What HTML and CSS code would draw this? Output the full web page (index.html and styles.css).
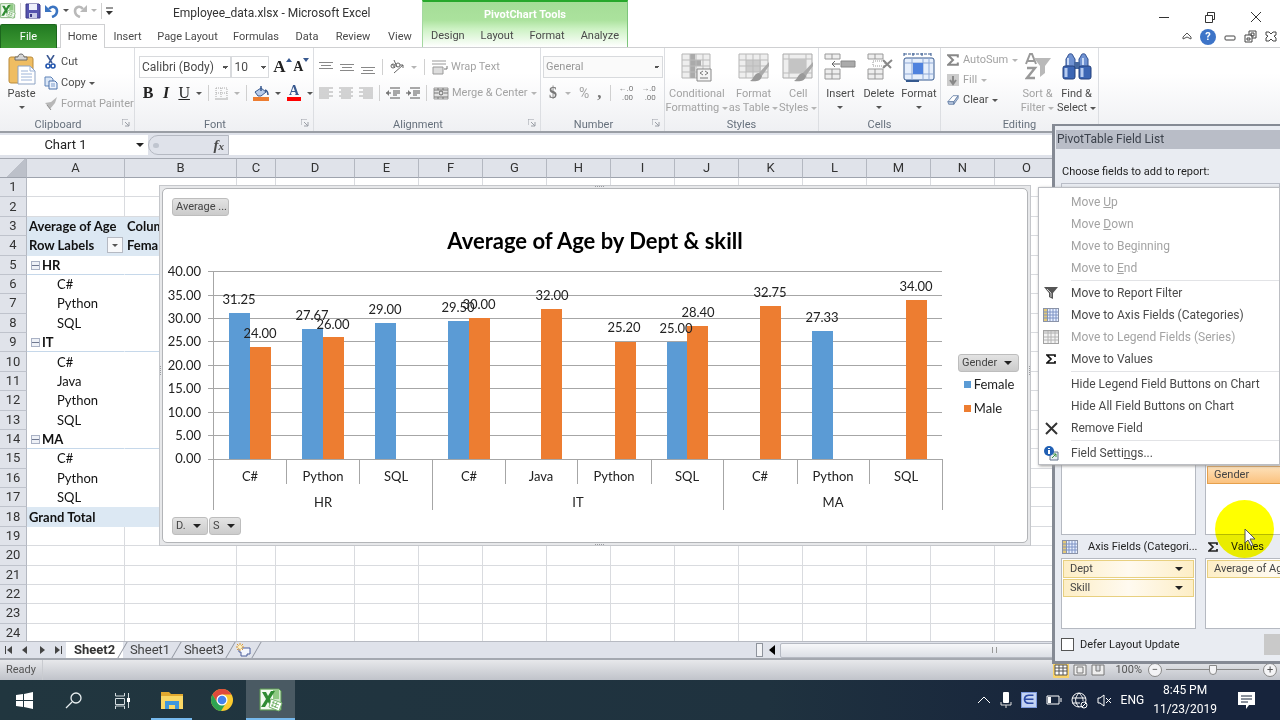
FILE: index.html
```html
<!DOCTYPE html>
<html lang="en">
<head>
<meta charset="utf-8">
<title>Employee_data.xlsx - Microsoft Excel</title>
<link rel="stylesheet" href="styles.css">
</head>
<body>
<svg class="defs" aria-hidden="true">
  <symbol id="excel" viewBox="0 0 24 24">
    <path d="M1 1h19l2 2v19H1z" fill="#cfe8cb" stroke="#5c9b52"/>
    <path d="M2 2h12v19H2z" fill="#f2faf0"/><path d="M14 2h6v9h-6z" fill="#8ec983"/>
    <path d="M3 4h4l2 4 3-5h4l-5 8 5 8h-4l-3-5-3 5H2l5-8z" fill="#2f8b33"/>
    <path d="M12 11l11 4-3 8-10-4z" fill="#fff" stroke="#79b56f"/><path d="M13 14l7 3M12 17l7 3M15 13l-2 6M18 14l-2 6" stroke="#79b56f"/>
  </symbol>
  <symbol id="launch" viewBox="0 0 8 8"><path d="M0 6V0h6M3 3l4 4M7 3v4H3" fill="none" stroke="#9a9ea6"/></symbol>
  <symbol id="grid" viewBox="0 0 16 14">
    <path d="M0 0h16v14H0z" fill="#8a93a8"/><path d="M1 1h3v12H1z" fill="#e2c878"/><path d="M5 1h10v12H5z" fill="#e8f0ff"/>
    <path d="M1 4h14M1 7h14M1 10h14M7 1v12M10 1v12M13 1v12" stroke="#7d92c4" fill="none"/>
  </symbol>
  <symbol id="gridgray" viewBox="0 0 16 14">
    <path d="M0 0h16v14H0z" fill="#a2a2a2"/><path d="M1 4h14v9H1z" fill="#f3f3f3"/><path d="M1 1h14v3H1z" fill="#cfcfcf"/>
    <path d="M1 7h14M1 10h14M5 1v12M8 1v12M12 1v12" stroke="#b4b4b4" fill="none"/>
  </symbol>
  <symbol id="sigma" viewBox="0 0 10 10"><path d="M9 3V1H1l4 4-4 4h8V7" fill="none" stroke="currentColor" stroke-width="1.7"/></symbol>
</svg>

<header class="top">
  <div class="top-main">
    <div class="quick">
      <svg width="16" height="16"><use href="#excel"/></svg>
      <i class="rule"></i>
      <button aria-label="Save"><svg width="16" height="16" viewBox="0 0 16 16"><path d="M1 1h13l1 1v13H1z" fill="#5553ae" stroke="#3c3a86"/><path d="M4 1h8v6H4z" fill="#eef0fb"/><path d="M4 10h8v5H4z" fill="#c8cbe8"/><path d="M5 11h2v3H5z" fill="#3c3a86"/></svg></button>
      <button aria-label="Undo"><svg width="14" height="14" viewBox="0 0 14 14"><path d="M4 5c3-4 8-2 8 2 0 3-2 5-5 6" fill="none" stroke="#3b74c1" stroke-width="2.6"/><path d="M0 1v7h7z" fill="#3b74c1"/></svg></button>
      <i class="caret"></i>
      <button aria-label="Redo"><svg width="14" height="14" viewBox="0 0 14 14"><path d="M10 5C7 1 2 3 2 7c0 3 2 5 5 6" fill="none" stroke="#b9b9b9" stroke-width="2.6"/><path d="M14 1v7H7z" fill="#b9b9b9"/></svg></button>
      <i class="caret dim"></i>
      <i class="rule"></i>
      <button aria-label="Customize toolbar"><svg width="7" height="8" viewBox="0 0 7 8"><path d="M0 1h7" stroke="#333"/><path d="M0 4h7L3 8z" fill="#333"/></svg></button>
      <h1>Employee_data.xlsx - Microsoft Excel</h1>
    </div>
    <nav class="tabs">
      <button class="file">File</button>
      <button class="active">Home</button>
      <button class="w-insert">Insert</button>
      <button class="w-page">Page Layout</button>
      <button class="w-form">Formulas</button>
      <button class="w-data">Data</button>
      <button class="w-rev">Review</button>
      <button class="w-view">View</button>
    </nav>
  </div>
  <div class="context">
    <strong>PivotChart Tools</strong>
    <nav><button>Design</button><button>Layout</button><button>Format</button><button>Analyze</button></nav>
  </div>
  <div class="window">
    <div class="winbtns">
      <button aria-label="Minimize"><svg width="12" height="12"><path d="M1 6.500h10" stroke="#333"/></svg></button>
      <button aria-label="Restore"><svg width="12" height="12" fill="none" stroke="#333"><path d="M1.500 4.500h7v7h-7zM3.500 4V1.500h7v7H9"/></svg></button>
      <button aria-label="Close"><svg width="12" height="12" stroke="#333"><path d="M1 1l10 10M11 1L1 11"/></svg></button>
    </div>
    <div class="docbtns">
      <button aria-label="Collapse ribbon"><svg width="10" height="9" fill="none" stroke="#555"><path d="M1 5l4-4 4 4v2L5 5 1 7z"/></svg></button>
      <button class="help" aria-label="Help">?</button>
      <button aria-label="Minimize workbook"><svg width="12" height="8" fill="none" stroke="#444"><rect x="1" y="3" width="10" height="4" rx="1"/></svg></button>
      <button aria-label="Restore workbook"><svg width="13" height="13" fill="#fff" stroke="#444"><path d="M5 1h7v7H5z"/><path d="M7 3h3v3H7zM1 5h7v7H1z"/><path d="M3 8h3v2H3z"/></svg></button>
      <button aria-label="Close workbook"><svg width="12" height="11" viewBox="0 0 12 11" fill="#fff" stroke="#444"><path d="M1 1h3l2 2 2-2h3v3L9 5l2 2v3H8L6 8l-2 2H1V7l2-2-2-1z"/></svg></button>
    </div>
  </div>
</header>

<section class="ribbon">
  <div class="group g-clip">
    <div class="body">
      <button class="big"><svg width="28" height="32" viewBox="0 0 28 32"><rect x="1" y="4" width="24" height="26" rx="2" fill="#efbd62" stroke="#b98b3c"/><path d="M7 7V4h3c0-4 6-4 6 0h3v3z" fill="#d5d5d5" stroke="#6d6d6d"/><path d="M10 13h12l5 5v13H10z" fill="#fff" stroke="#8da3c4"/><path d="M22 13v5h5M13 18h7M13 21h11M13 24h11M13 27h11" stroke="#9db4d8" fill="none"/></svg>Paste<i class="caret"></i></button>
      <div class="stack clip-stack">
        <button><svg width="14" height="14" viewBox="0 0 14 14"><path d="M3 0l5 8M10 0L5 8" stroke="#3d5a94" stroke-width="1.6"/><circle cx="4" cy="11" r="2" fill="none" stroke="#2356ae" stroke-width="1.6"/><circle cx="9" cy="11" r="2" fill="none" stroke="#2356ae" stroke-width="1.6"/></svg>Cut</button>
        <button><svg width="14" height="14" viewBox="0 0 14 14"><path d="M1 1h6l2 2v7H1z" fill="#dbe7f7" stroke="#5f83b8"/><path d="M5 5h6l2 2v6H5z" fill="#eef4fd" stroke="#4a70aa"/><path d="M7 8h4M7 10h4" stroke="#7d9bcb"/></svg>Copy<i class="caret"></i></button>
        <button disabled><svg width="14" height="14" viewBox="0 0 14 14"><path d="M1 6l6-1 6-5-2 6-5 6-2-3z" fill="#b7b7b7"/><path d="M3 8l4 5" stroke="#8b8b8b"/></svg>Format Painter</button>
      </div>
    </div>
    <footer>Clipboard<svg><use href="#launch"/></svg></footer>
  </div>

  <div class="group g-font">
    <div class="body rows">
      <div class="line">
        <select class="face" aria-label="Font"><option>Calibri (Body)</option></select><select class="size" aria-label="Font size"><option>10</option></select>
        <button class="serif s17" aria-label="Grow font">A<svg width="6" height="4"><path d="M0 4l3-4 3 4z" fill="#38598f"/></svg></button>
        <button class="serif s14" aria-label="Shrink font">A<svg width="6" height="4"><path d="M0 0l3 4 3-4z" fill="#38598f"/></svg></button>
      </div>
      <div class="line fmt">
        <button class="serif s16">B</button><button class="serif s16 it">I</button><button class="serif s16 un">U</button><i class="caret"></i>
        <i class="rule"></i>
        <button disabled aria-label="Borders"><svg width="13" height="13" fill="none" stroke="#aaa" stroke-dasharray="1 1"><path d="M1 1h11v10M1 1v10M6 1v10M1 6h11"/><path d="M0 12h13" stroke-dasharray="none"/></svg></button><i class="caret dim"></i>
        <i class="rule"></i>
        <button aria-label="Fill color"><svg width="16" height="16" viewBox="0 0 16 16"><path d="M2 7l6-4 5 4-5 4H5z" fill="#b9cdeb" stroke="#38598f"/><path d="M8 6V1M12 5c3 1 3 3 3 5" stroke="#38598f" fill="none" stroke-width="1.5"/><path d="M0 12h16v4H0z" fill="#ed7d31"/></svg></button><i class="caret"></i>
        <button class="serif fontcolor" aria-label="Font color">A</button><i class="caret"></i>
      </div>
    </div>
    <footer>Font<svg><use href="#launch"/></svg></footer>
  </div>

  <div class="group g-align">
    <div class="body rows">
      <div class="line">
        <button disabled aria-label="Top"><svg width="14" height="14" stroke="#888"><path d="M0 2.500h14M2 5.500h10M0 8.500h14"/></svg></button>
        <button disabled aria-label="Middle"><svg width="14" height="14" stroke="#888"><path d="M0 4.500h14M2 7.500h10M0 10.500h14"/></svg></button>
        <button disabled aria-label="Bottom"><svg width="14" height="14" stroke="#888"><path d="M0 7.500h14M2 10.500h10M0 13.500h14"/></svg></button>
        <i class="rule"></i>
        <button disabled aria-label="Orientation"><svg width="14" height="14" viewBox="0 0 14 14" fill="none" stroke="#666"><circle cx="3" cy="6" r="2"/><circle cx="8" cy="5" r="2"/><path d="M5 8L2 4M7 7L4 0M4 13l9-8M13 5v3M13 5h-3"/></svg></button><i class="caret dim"></i>
        <i class="rule"></i>
        <button disabled><svg width="16" height="15" viewBox="0 0 16 15"><path d="M0 1h14M0 4h14" stroke="#999"/><path d="M1 7h10v7H1z" fill="#ddd" stroke="#999"/><path d="M15 6v3h-3" fill="none" stroke="#777"/></svg>Wrap Text</button>
      </div>
      <div class="line tight">
        <button disabled aria-label="Left"><svg width="14" height="12" stroke="#aaa"><path d="M0 1h14M0 3h10M0 5h14M0 7h10M0 9h14M0 11h10"/></svg></button>
        <button disabled aria-label="Center"><svg width="14" height="12" stroke="#aaa"><path d="M0 1h14M2 3h10M0 5h14M2 7h10M0 9h14M2 11h10"/></svg></button>
        <button disabled aria-label="Right"><svg width="14" height="12" stroke="#aaa"><path d="M0 1h14M4 3h10M0 5h14M4 7h10M0 9h14M4 11h10"/></svg></button>
        <i class="rule"></i>
        <button aria-label="Decrease indent"><svg width="14" height="12" stroke="#555"><path d="M4 1h10M7 4h7M7 6h7M7 8h4M4 11h10M0 6h5" /><path d="M3 3L0 6l3 3" fill="#777" stroke="none"/></svg></button>
        <button aria-label="Increase indent"><svg width="14" height="12" stroke="#555"><path d="M4 1h10M7 4h7M7 6h7M7 8h4M4 11h10M0 6h5"/><path d="M2 3l3 3-3 3" fill="#777" stroke="none"/></svg></button>
        <i class="rule"></i>
        <button disabled><svg width="16" height="13" viewBox="0 0 16 13"><path d="M1 1h14v11H1z" fill="#e3e3e3" stroke="#999"/><path d="M1 3h14M1 10h14M5 1v2M10 1v2M5 10v2M10 10v2M1 6h4M11 6h4" stroke="#777"/><circle cx="8" cy="6" r="2" fill="none" stroke="#666"/></svg>Merge &amp; Center<i class="caret dim"></i></button>
      </div>
    </div>
    <footer>Alignment<svg><use href="#launch"/></svg></footer>
  </div>

  <div class="group g-num">
    <div class="body rows">
      <div class="line"><select class="numfmt" aria-label="Number format"><option>General</option></select></div>
      <div class="line">
        <button disabled class="serif s16">$</button><i class="caret dim"></i><button disabled class="s14">%</button><button disabled class="serif s17">,</button>
        <i class="rule"></i>
        <button disabled class="dec"><span>←.0</span><span>.00</span></button><button disabled class="dec"><span>→.0</span><span>.00</span></button>
      </div>
    </div>
    <footer>Number<svg><use href="#launch"/></svg></footer>
  </div>

  <div class="group g-style">
    <div class="body three">
      <button class="big" disabled><svg width="32" height="30" viewBox="0 0 32 30"><path d="M1 1h28v24H1z" fill="#eee" stroke="#b5b5b5"/><path d="M9 1h5v24H9zM14 7h6v6h-6z" fill="#aaa"/><path d="M1 7h28M1 13h28M1 19h28M9 1v24M15 1v24M22 1v24" stroke="#bbb"/><path d="M16 16h14v12H16z" fill="#f4f4f4" stroke="#888"/><path d="M22 18l-3 2 3 2M24 18l3 2-3 2M19 25h8" stroke="#777" fill="none"/></svg>Conditional<span>Formatting<i class="caret dim"></i></span></button>
      <button class="big" disabled><svg width="32" height="30" viewBox="0 0 32 30"><path d="M1 1h29v24H1z" fill="#eee" stroke="#b5b5b5"/><path d="M8 7h15v12H8z" fill="#ccc"/><path d="M1 7h29M1 13h29M1 19h29M8 1v24M15 1v24M22 1v24" stroke="#bbb"/><path d="M31 9L20 21l3 3 8-11z" fill="#aaa"/><path d="M21 20c-5 0-5 6-9 8 6 1 11 0 12-5z" fill="#999"/></svg>Format<span>as Table<i class="caret dim"></i></span></button>
      <button class="big" disabled><svg width="32" height="30" viewBox="0 0 32 30"><path d="M1 1h29v24H1z" fill="#eee" stroke="#aaa"/><path d="M1 6h29M1 20h29M7 1v24M24 1v24" stroke="#bbb"/><path d="M7 6h17v14H7z" fill="#c4c4c4"/><path d="M31 9L20 21l3 3 8-11z" fill="#aaa"/><path d="M21 20c-5 0-5 6-9 8 6 1 11 0 12-5z" fill="#999"/></svg>Cell<span>Styles<i class="caret dim"></i></span></button>
    </div>
    <footer>Styles</footer>
  </div>

  <div class="group g-cells">
    <div class="body three">
      <button class="big"><svg width="32" height="30" viewBox="0 0 32 30"><path d="M1 1h15v5H1zM1 16h15v10H1zM8 1v5M8 16v10M1 21h15" fill="#eee" stroke="#999"/><path d="M17 8h14v6H17z" fill="#aaa" stroke="#888"/><path d="M16 11H8M11 8l-3 3 3 3" fill="none" stroke="#666"/></svg>Insert<i class="caret"></i></button>
      <button class="big"><svg width="28" height="30" viewBox="0 0 28 30"><path d="M3 1h15v5H3zM3 16h15v10H3zM10 1v5M10 16v10M3 21h15" fill="#eee" stroke="#999"/><path d="M8 8h12v5H8z" fill="none" stroke="#999" stroke-dasharray="1 1"/><path d="M18 7l8 8M27 7l-9 8" stroke="#888" stroke-width="2"/></svg>Delete<i class="caret"></i></button>
      <button class="big"><svg width="32" height="30" viewBox="0 0 32 30"><path d="M1 1h27M1 0v3M10 0v3M19 0v3M28 0v3" stroke="#35598f" stroke-dasharray="3 1"/><rect x="1" y="5" width="30" height="22" rx="2" fill="#e6effc" stroke="#35598f"/><path d="M2 10h28M2 21h28M9 5v22M20 5v22M26 5v22" stroke="#8fa9d6"/><path d="M10 10h10v11H10z" fill="#4f82de"/><path d="M3 28h13" stroke="#35598f" stroke-width="2"/></svg>Format<i class="caret"></i></button>
    </div>
    <footer>Cells</footer>
  </div>

  <div class="group g-edit">
    <div class="body">
      <div class="stack edit-stack">
        <button disabled><svg class="gray" width="12" height="12"><use href="#sigma"/></svg>AutoSum<i class="caret dim"></i></button>
        <button disabled><svg width="12" height="12"><path d="M0 0h12v12H0z" fill="#ccc"/><path d="M6 2v7M3 6l3 4 3-4" stroke="#888" fill="none" stroke-width="2"/></svg>Fill<i class="caret dim"></i></button>
        <button><svg width="12" height="12" viewBox="0 0 14 12"><path d="M1 8l6-7h6L8 8z" fill="#fff" stroke="#667fa5"/><path d="M1 8h7v3H2zM8 8l5-7v3l-5 7z" fill="#bccbe2" stroke="#667fa5"/></svg>Clear<i class="caret"></i></button>
      </div>
      <button class="big" disabled><svg width="26" height="28" viewBox="0 0 26 28"><path d="M1 11L5 1h2l4 10M3 8h6" fill="none" stroke="#999" stroke-width="2"/><path d="M2 15h8L2 25h8" fill="none" stroke="#999" stroke-width="2.4"/><path d="M9 5h17l-6 8v7l-5 4V13z" fill="#b9b9b9"/></svg>Sort &amp;<span>Filter<i class="caret dim"></i></span></button>
      <button class="big"><svg width="30" height="28" viewBox="0 0 30 28"><path d="M6 3c0-3 5-3 5 0l2 3v8H4V6zM19 3c0-3 5-3 5 0l2 3v8h-9V6z" fill="#6f92d2" stroke="#2e4e8f"/><path d="M12 9h6v7h-6z" fill="#46689f"/><rect x="1" y="13" width="12" height="13" rx="2" fill="#3c66b4" stroke="#24417c"/><rect x="17" y="13" width="12" height="13" rx="2" fill="#3c66b4" stroke="#24417c"/><path d="M4 15v9M20 15v9" stroke="#b6cbf0" stroke-width="3"/><path d="M6 5v7M21 5v7" stroke="#c9daf6" stroke-width="2"/></svg>Find &amp;<span>Select<i class="caret"></i></span></button>
    </div>
    <footer>Editing</footer>
  </div>
</section>

<section class="formula">
  <input class="namebox" aria-label="Name box" value="Chart 1"><button class="namedrop" aria-label="Names"><i class="caret lg"></i></button>
  <div class="fxbar"><i></i><button class="fx">f<small>x</small></button></div>
  <input class="fxinput" aria-label="Formula">
</section>

<main class="sheet">
  <table>
    <colgroup><col class="c0"><col class="ca"><col class="cb"><col class="cc"><col class="cd"><col class="cn"><col class="cn"><col class="cn"><col class="cn"><col class="cn"><col class="cn"><col class="cn"><col class="cn"><col class="cn"><col class="cn"><col class="cn"><col></colgroup>
    <thead><tr><th class="corner"></th><th>A</th><th>B</th><th>C</th><th>D</th><th>E</th><th>F</th><th>G</th><th>H</th><th>I</th><th>J</th><th>K</th><th>L</th><th>M</th><th>N</th><th>O</th><th></th></tr></thead>
    <tbody>
      <tr><th>1</th><td></td><td></td><td></td><td></td><td></td><td></td><td></td><td></td><td></td><td></td><td></td><td></td><td></td><td></td><td></td><td></td></tr>
      <tr><th>2</th><td></td><td></td><td></td><td></td><td></td><td></td><td></td><td></td><td></td><td></td><td></td><td></td><td></td><td></td><td></td><td></td></tr>
      <tr class="band"><th>3</th><td>Average of Age</td><td>Column Labels</td><td colspan="14"></td></tr>
      <tr class="band"><th>4</th><td><span class="rl">Row Labels<button aria-label="Filter rows"><i class="caret"></i></button></span></td><td>Female</td><td colspan="14"></td></tr>
      <tr class="head"><th>5</th><td><i class="minus"></i>HR</td><td></td><td colspan="14"></td></tr>
      <tr class="item"><th>6</th><td>C#</td><td></td><td colspan="14"></td></tr>
      <tr class="item"><th>7</th><td>Python</td><td></td><td colspan="14"></td></tr>
      <tr class="item"><th>8</th><td>SQL</td><td></td><td colspan="14"></td></tr>
      <tr class="head"><th>9</th><td><i class="minus"></i>IT</td><td></td><td colspan="14"></td></tr>
      <tr class="item"><th>10</th><td>C#</td><td></td><td colspan="14"></td></tr>
      <tr class="item"><th>11</th><td>Java</td><td></td><td colspan="14"></td></tr>
      <tr class="item"><th>12</th><td>Python</td><td></td><td colspan="14"></td></tr>
      <tr class="item"><th>13</th><td>SQL</td><td></td><td colspan="14"></td></tr>
      <tr class="head"><th>14</th><td><i class="minus"></i>MA</td><td></td><td colspan="14"></td></tr>
      <tr class="item"><th>15</th><td>C#</td><td></td><td colspan="14"></td></tr>
      <tr class="item"><th>16</th><td>Python</td><td></td><td colspan="14"></td></tr>
      <tr class="item"><th>17</th><td>SQL</td><td></td><td colspan="14"></td></tr>
      <tr class="band"><th>18</th><td>Grand Total</td><td></td><td colspan="14"></td></tr>
      <tr><th>19</th><td></td><td></td><td></td><td></td><td></td><td></td><td></td><td></td><td></td><td></td><td></td><td></td><td></td><td></td><td></td><td></td></tr>
      <tr><th>20</th><td></td><td></td><td></td><td></td><td></td><td></td><td></td><td></td><td></td><td></td><td></td><td></td><td></td><td></td><td></td><td></td></tr>
      <tr><th>21</th><td></td><td></td><td></td><td></td><td></td><td></td><td></td><td></td><td></td><td></td><td></td><td></td><td></td><td></td><td></td><td></td></tr>
      <tr><th>22</th><td></td><td></td><td></td><td></td><td></td><td></td><td></td><td></td><td></td><td></td><td></td><td></td><td></td><td></td><td></td><td></td></tr>
      <tr><th>23</th><td></td><td></td><td></td><td></td><td></td><td></td><td></td><td></td><td></td><td></td><td></td><td></td><td></td><td></td><td></td><td></td></tr>
      <tr><th>24</th><td></td><td></td><td></td><td></td><td></td><td></td><td></td><td></td><td></td><td></td><td></td><td></td><td></td><td></td><td></td><td></td></tr>
    </tbody>
  </table>

  <section class="chart" aria-label="Average of Age by Dept and skill">
    <svg class="plot" viewBox="163 189 864 353">
      <text class="ctitle" x="595" y="249">Average of Age by Dept &amp; skill</text>
      <g class="lines">
        <path d="M208 271.500H942M208 295.500H942M208 318.500H942M208 341.500H942M208 365.500H942M208 388.500H942M208 412.500H942M208 435.500H942M208 459.500H942"/>
        <path d="M213.500 271V510M432.500 459V510M723.500 459V510M942.500 459V510M286.500 459V484M359.500 459V484M505.500 459V484M577.500 459V484M651.500 459V484M797.500 459V484M869.500 459V484"/>
      </g>
      <g class="axis">
        <text x="201" y="276">40.00</text><text x="201" y="300">35.00</text><text x="201" y="323">30.00</text><text x="201" y="346">25.00</text><text x="201" y="370">20.00</text><text x="201" y="393">15.00</text><text x="201" y="417">10.00</text><text x="201" y="440">5.00</text><text x="201" y="463">0.00</text>
      </g>
      <g class="female">
        <path d="M229 313h21v146h-21zM302 329h21v130h-21zM375 323h21v136h-21zM448 321h21v138h-21zM667 342h21v117h-21zM812 331h21v128h-21z"/>
        <path d="M964 381h7v7h-7z"/>
      </g>
      <g class="male">
        <path d="M250 347h21v112h-21zM323 337h21v122h-21zM469 318h21v141h-21zM541 309h21v150h-21zM615 342h21v117h-21zM687 326h21v133h-21zM760 306h21v153h-21zM906 300h21v159h-21z"/>
        <path d="M964 405h7v7h-7z"/>
      </g>
      <g class="labels">
        <text x="239" y="304">31.25</text><text x="260" y="338">24.00</text><text x="312" y="320">27.67</text><text x="333" y="329">26.00</text><text x="385" y="314">29.00</text><text x="458" y="312">29.50</text><text x="479" y="309">30.00</text><text x="552" y="300">32.00</text><text x="624" y="332">25.20</text><text x="676" y="333">25.00</text><text x="698" y="317">28.40</text><text x="770" y="297">32.75</text><text x="822" y="322">27.33</text><text x="916" y="291">34.00</text>
        <text x="250" y="481">C#</text><text x="323" y="481">Python</text><text x="396" y="481">SQL</text><text x="469" y="481">C#</text><text x="541" y="481">Java</text><text x="614" y="481">Python</text><text x="687" y="481">SQL</text><text x="760" y="481">C#</text><text x="833" y="481">Python</text><text x="906" y="481">SQL</text>
        <text x="323" y="507">HR</text><text x="578" y="507">IT</text><text x="833" y="507">MA</text>
        <text x="994" y="389">Female</text><text x="988" y="413">Male</text>
      </g>
    </svg>
    <i class="grip top-grip"></i><i class="grip bottom-grip"></i><i class="grip left-grip"></i><i class="grip right-grip"></i>
    <button class="fieldbtn f-avg">Average ...</button>
    <button class="fieldbtn f-gender">Gender<i class="caret lg"></i></button>
    <div class="f-axis"><button class="fieldbtn">D.<i class="caret lg"></i></button><button class="fieldbtn">S<i class="caret lg"></i></button></div>
  </section>
</main>

<section class="sheetbar">
  <div class="navs">
    <button aria-label="First"><svg width="8" height="8"><path d="M0 0h1v8H0zM7 0v8L2 4z"/></svg></button>
    <button aria-label="Previous"><svg width="8" height="8"><path d="M6 0v8L1 4z"/></svg></button>
    <button aria-label="Next"><svg width="8" height="8"><path d="M2 0v8l5-4z"/></svg></button>
    <button aria-label="Last"><svg width="8" height="8"><path d="M7 0h1v8H7zM1 0v8l5-4z"/></svg></button>
  </div>
  <button class="stab on">Sheet2</button><button class="stab">Sheet1</button><button class="stab">Sheet3</button>
  <button class="stab new" aria-label="New sheet"><svg width="15" height="14" viewBox="0 0 15 14"><path d="M3 5h11v6h-3v2H5V9H3z" fill="#f4f7fe" stroke="#4d5f9c"/><path d="M4 0v8M0 4h8M1 1l6 6M7 1L1 7" stroke="#e09a2b"/><circle cx="4" cy="4" r="2" fill="#fff3c0"/></svg></button>
  <div class="scroll"><i class="split"></i><button aria-label="Scroll left"><svg width="6" height="10"><path d="M6 0v10L0 5z"/></svg></button><div class="thumb"><i></i></div></div>
</section>

<footer class="status">
  <span class="ready">Ready</span>
  <div class="views">
    <button class="on" aria-label="Normal"><svg width="14" height="12"><path d="M1 1h12v10H1zM1 4h12M1 7h12M5 1v10M9 1v10" fill="#fff" stroke="#555"/></svg></button>
    <button aria-label="Page layout"><svg width="14" height="12"><path d="M1 1h12v10H1zM4 3h6v6H4z" fill="#eee" stroke="#777"/></svg></button>
    <button aria-label="Page break"><svg width="14" height="12"><path d="M1 1h12v10H1zM5 1v6h4V1" fill="#eee" stroke="#777"/></svg></button>
    <span>100%</span>
    <button class="round" aria-label="Zoom out">−</button>
    <input type="range" aria-label="Zoom" value="50">
    <button class="round" aria-label="Zoom in">+</button>
  </div>
</footer>

<footer class="taskbar">
  <button aria-label="Start"><svg width="17" height="17" viewBox="0 0 17 17" fill="#fff"><path d="M0 3l7-1v6H0zM8 2l9-2v8H8zM0 9h7v6l-7-1zM8 9h9v8l-9-2z"/></svg></button>
  <button aria-label="Search"><svg width="18" height="18" fill="none" stroke="#e8eef0" stroke-width="1.300"><circle cx="11" cy="7" r="5"/><path d="M7 11l-6 6"/></svg></button>
  <button aria-label="Task view"><svg width="17" height="17" fill="none" stroke="#d5dde0"><path d="M1.500 1v3h9V1M1.500 6.500h9v6h-9zM1.500 17v-3h9v3M14.500 1v15"/><path d="M13 6h3v4h-3z" fill="#fff" stroke="none"/></svg></button>
  <button class="open" aria-label="File Explorer"><svg width="22" height="19" viewBox="0 0 22 19"><path d="M0 1h8l2 2h12v15H0z" fill="#e2a92f"/><path d="M0 5h22v13H0z" fill="#fbd865"/><path d="M4 18v-8h14v8h-4v-4H8v4z" fill="#3f97dc"/></svg></button>
  <button aria-label="Chrome"><svg width="22" height="22" viewBox="0 0 22 22"><circle cx="11" cy="11" r="11" fill="#fbcb2f"/><path d="M1.500 5.500A11 11 0 0 1 20.500 5.500H11L6 13z" fill="#df4a3c"/><path d="M1.500 5.500A11 11 0 0 0 10 22l5-8-4 2-5-3z" fill="#2ea352"/><circle cx="11" cy="11" r="5.500" fill="#fff"/><circle cx="11" cy="11" r="4.300" fill="#4583ec"/></svg></button>
  <button class="current" aria-label="Excel"><svg width="24" height="24"><use href="#excel"/></svg></button>
  <div class="tray">
    <svg width="14" height="8" fill="none" stroke="#fff"><path d="M1 7l6-6 6 6"/></svg>
    <svg width="12" height="16"><rect x="3" y="0" width="6" height="11" rx="1" fill="#fff"/><path d="M1 10v3h10v-3M6 13v3" stroke="#ddd" fill="none"/></svg>
    <b class="ime">∈</b>
    <svg width="16" height="10" fill="none" stroke="#fff"><path d="M1 1h12v8H1zM15 3v4"/><path d="M2 2h3v6H2z" fill="#fff" stroke="none"/></svg>
    <svg width="17" height="17" fill="none" stroke="#fff"><circle cx="8" cy="8" r="7"/><path d="M1 6h14M1 11h8M8 1c-5 5-4 10 0 14M8 1c4 4 4 6 4 8"/><circle cx="13" cy="13" r="3" fill="#17253b"/><path d="M11 15l4-4"/></svg>
    <svg width="15" height="13" fill="none" stroke="#fff"><path d="M1 4h2l4-3v11L3 9H1zM9 4l5 5M14 4L9 9"/></svg>
    <span class="lang">ENG</span>
    <span class="clock">8:45 PM<br>11/23/2019</span>
    <svg width="17" height="17"><path d="M0 0h17v13h-6l-3 4v-4H0z" fill="#fff"/><path d="M3 4h11M3 7h11M3 10h7" stroke="#17253b"/></svg>
  </div>
</footer>

<aside class="panel">
  <h2>PivotTable Field List</h2>
  <p>Choose fields to add to report:</p>
  <div class="fields"></div>
  <div class="areas">
    <ul class="filter"></ul>
    <ul class="legend"><li class="hot">Gender</li></ul>
    <h3><svg width="16" height="14"><use href="#grid"/></svg>Axis Fields (Categori...</h3>
    <h3><svg width="10" height="10"><use href="#sigma"/></svg>Values</h3>
    <ul><li>Dept<i class="caret lg"></i></li><li>Skill<i class="caret lg"></i></li></ul>
    <ul><li>Average of Age</li></ul>
  </div>
  <div class="defer"><label><input type="checkbox">Defer Layout Update</label><button aria-label="Update" disabled></button></div>
</aside>

<div class="glow"></div>
<svg class="pointer" width="12" height="19" viewBox="0 0 12 19"><path d="M1 1v14l3-3 3 6 2-1-3-6h5z" fill="#fff" stroke="#555"/></svg>

<div class="menu" role="menu">
  <button disabled><i></i>Move <u>U</u>p</button>
  <button disabled><i></i>Move <u>D</u>own</button>
  <button disabled><i></i>Move to Be<u>g</u>inning</button>
  <button disabled><i></i>Move to <u>E</u>nd</button>
  <hr>
  <button><i><svg width="14" height="12"><path d="M0 0h14L9 6v6l-4-2V6z" fill="#555"/><path d="M3 2l4 4v4" stroke="#ccc" fill="none"/></svg></i>Move to Report Filter</button>
  <button><i><svg width="16" height="14"><use href="#grid"/></svg></i>Move to Axis Fields (Categories)</button>
  <button disabled><i><svg width="16" height="14"><use href="#gridgray"/></svg></i>Move to Legend Fields (Series)</button>
  <button><i><svg class="ink" width="10" height="10"><use href="#sigma"/></svg></i>Move to Values</button>
  <hr>
  <button><i></i>Hide Legend Field Buttons on Chart</button>
  <button><i></i>Hide All Field Buttons on Chart</button>
  <button><i><svg width="13" height="13" stroke="#333" stroke-width="2"><path d="M1 1l11 11M12 1L1 12"/></svg></i>Remove Field</button>
  <hr>
  <button><i><svg width="15" height="15"><path d="M6 6h8v8H6z" fill="#e6ecf3" stroke="#63758c"/><path d="M8 12l4-4M9 8h3v3" stroke="#3c9442" fill="none"/><circle cx="5" cy="5" r="5" fill="#2160b4"/><path d="M5 2v1M5 4v4" stroke="#fff" stroke-width="2"/></svg></i>Field Setti<u>n</u>gs...</button>
</div>
</body>
</html>
```

FILE: styles.css
```css
* { box-sizing: border-box; }
body {
  margin: 0;
  height: 100vh;
  display: flex;
  flex-direction: column;
  overflow: hidden;
  position: relative;
  background: #fff;
  color: #4a4a4a;
  font: 11px/14px Roboto, "Open Sans", sans-serif;
}
button, input, select { font: inherit; color: inherit; }
button { background: none; border: 0; padding: 0; white-space: nowrap; }
button:disabled, .dim { color: #a3a3a3; }
svg { display: block; flex: none; }
.defs { position: absolute; width: 0; height: 0; }
h1, h2, h3, p, ul { margin: 0; padding: 0; font-weight: normal; font-size: inherit; list-style: none; }
.caret {
  display: inline-block; flex: none;
  border: 3px solid transparent; border-bottom: 0;
  border-top: 3px solid #555;
}
.caret.dim { border-top-color: #b5b5b5; }
.caret.lg { border-width: 4px 4px 0; border-top-color: #222; }
.rule { width: 1px; height: 16px; background: #d0d0d0; flex: none; }

/* Title bar and tabs */
.top { display: flex; height: 48px; flex: none; border-bottom: 1px solid #cfd0d2; }
.top-main { width: 422px; display: flex; flex-direction: column; }
.quick { display: flex; align-items: center; height: 24px; gap: 4px; padding-bottom: 3px; }
.quick h1 { flex: 1; font-size: 12px; line-height: 20px; padding: 5px 0 0 56px; color: #333; white-space: nowrap; }
.tabs { display: flex; height: 24px; }
.tabs button { text-align: center; padding-top: 1px; }
.tabs .file { width: 57px; margin-right: 3px; color: #fff; background: linear-gradient(#227a22, #3d9a33); border: 1px solid #1c661d; border-bottom: 0; border-radius: 2px 2px 0 0; }
.tabs .active { width: 45px; border: 1px solid #cfd0d2; border-bottom: 0; background: #fff; height: 24px; }
.w-insert { width: 45px; }
.w-page { width: 75px; }
.w-form { width: 62px; }
.w-data { width: 40px; }
.w-rev { width: 52px; }
.w-view { width: 42px; }
.context { width: 206px; display: flex; flex-direction: column; border-top: 2px solid #27a82b; border-left: 1px solid #a4d8a0; border-right: 1px solid #7dc57b; background: linear-gradient(#a5dd97 0, #abe29d 40%, #cdf2c4 60%, #fff); }
.context strong { height: 22px; line-height: 26px; text-align: center; color: #fff; }
.context nav { display: flex; justify-content: space-around; flex: 1; padding-top: 1px; }
.window { flex: 1; display: flex; flex-direction: column; align-items: flex-end; }
.winbtns { display: flex; gap: 34px; padding: 8px 18px 0 0; height: 26px; }
.docbtns { display: flex; gap: 8px; align-items: center; height: 21px; padding-right: 3px; }
.help { width: 16px; height: 16px; border-radius: 50%; background: #3d74c8; color: #fff; font-weight: bold; line-height: 16px; }

/* Ribbon */
.ribbon { display: flex; height: 85px; flex: none; background: linear-gradient(#fff 30%, #eff0f3); border-bottom: 2px solid #9a9ea5; }
.group { display: flex; flex-direction: column; border-right: 1px solid #dcdee2; }
.g-clip { width: 135px; }
.g-font { width: 179px; }
.g-align { width: 227px; }
.g-num { width: 124px; }
.g-style { width: 154px; }
.g-cells { width: 122px; }
.g-edit { width: 158px; }
.body { flex: 1; display: flex; min-height: 0; }
.group footer { height: 13px; display: flex; align-items: center; justify-content: center; color: #66707c; position: relative; padding-right: 18px; }
.group footer svg { position: absolute; right: 4px; top: 1px; width: 8px; height: 8px; }
.g-style footer, .g-cells footer, .g-edit footer { padding: 0; }
.big { display: flex; flex-direction: column; align-items: center; padding-top: 5px; line-height: 14px; }
.big svg { margin-bottom: 4px; }
.g-clip .big svg { margin-bottom: 2px; }
.big span { display: flex; align-items: center; gap: 3px; }
.big > .caret { margin-top: 5px; }
.g-clip .big { width: 43px; flex: none; }
.stack { display: flex; flex-direction: column; flex: none; }
.stack button { display: flex; align-items: center; gap: 4px; }
.clip-stack { padding: 4px 0 0 1px; gap: 1px; }
.clip-stack button { height: 20px; gap: 3px; }
.edit-stack { padding: 2px 0 0 6px; width: 77px; }
.edit-stack button { height: 20px; gap: 4px; }
.g-edit .big { width: 39px; }
.g-edit .big svg { margin-bottom: 6px; }
.three { justify-content: space-evenly; }
.g-cells .three { justify-content: space-around; padding-left: 2px; }
.rows { flex-direction: column; }
.line { display: flex; align-items: center; height: 30px; padding-left: 4px; gap: 6px; }
.rows .line:first-child { padding-top: 8px; }
.g-font .line:first-child { gap: 0; }
select { appearance: none; height: 22px; border: 1px solid #d8dadd; border-radius: 0; background: #fff; padding: 0 2px; background-image: linear-gradient(45deg, transparent 50%, #555 50%), linear-gradient(-45deg, transparent 50%, #555 50%); background-size: 3px 3px; background-position: right 5px center, right 2px center; background-repeat: no-repeat; }
.face { width: 93px; }
.size { width: 38px; margin-right: 4px; }
.face, .size { font-size: 12px; }
.numfmt { width: 120px; margin-left: -2px; color: #999; background-color: #fafafa; }
.serif { font-family: "Liberation Serif", serif; font-weight: bold; color: #222; }
.serif:disabled { color: #777; }
.s17 { font-size: 17px; }
.s16 { font-size: 16px; }
.s14 { font-size: 14px; }
.g-font .line:first-child button { width: 20px; display: flex; line-height: 18px; }
.it { font-style: italic; }
.un { text-decoration: underline; font-weight: normal; }
.fmt { padding-left: 7px; gap: 6px; }
.fmt .serif { width: 14px; }
.fmt .fontcolor { width: 16px; font-size: 14px; line-height: 12px; border-bottom: 4px solid #f00; color: #38598f; }
.g-align .line button { display: flex; align-items: center; gap: 3px; }
.g-align .line { gap: 7px; padding-left: 5px; }
.g-align .tight { gap: 6px; }
.g-num .line { gap: 8px; padding-left: 8px; }
.g-num .line:first-child { padding-left: 4px; }
.g-num .s14, .g-num .s16, .g-num .s17 { line-height: 16px; }
.line .dec { display: flex; flex-direction: column; align-items: flex-end; font-size: 8px; line-height: 8px; gap: 1px; color: #777; }
.gray { color: #888; }

/* Formula bar */
.formula { display: flex; height: 25px; flex: none; background: #dfe2ea; padding-bottom: 3px; padding-top: 2px; }
.formula input { border: 0; outline: 0; }
.namebox { width: 131px; text-align: center; font-size: 13px; background: #fff; color: #222; }
.namedrop { width: 17px; background: #fff; display: flex; align-items: center; justify-content: center; }
.fxbar { width: 81px; display: flex; align-items: center; justify-content: space-between; padding: 0 4px; border: 1px solid #b5b9c2; border-radius: 10px 0 0 10px; background: #dfe2ea; }
.fxbar i { width: 6px; height: 5px; border-radius: 3px; background: #c0c5cf; }
.fx { font: italic bold 15px/16px "Liberation Serif", serif; }
.fx small { font-size: 11px; }
.fxinput { flex: 1; background: #fff; }

/* Worksheet */
.sheet { flex: 1; min-height: 0; overflow: hidden; position: relative; }
table { width: 100%; height: 485px; table-layout: fixed; border-collapse: separate; border-spacing: 0; font: 13px/16px Lato, sans-serif; color: #111; }
.c0 { width: 27px; }
.ca { width: 98px; }
.cb { width: 112px; }
.cc { width: 39px; }
.cd { width: 79px; }
.cn { width: 64px; }
th { background: #e0e3ea; font-weight: normal; padding: 0; border-right: 1px solid #b4b8c1; border-bottom: 1px solid #bfc3cc; color: #333; font-family: Roboto, sans-serif; font-size: 13px; }
thead th { height: 20px; border-top: 1px solid #a5a9b2; border-bottom-color: #9ea3ad; }
.corner { background: linear-gradient(135deg, #e0e3ea 55%, #bcc0c9 55%); }
td { padding: 0 0 0 2px; border-right: 1px solid #d9dbdf; border-bottom: 1px solid #d9dbdf; white-space: nowrap; overflow: hidden; }
.band td, .head td, .item td { border-right-color: transparent; }
.band td { background: #dce8f3; border-color: #dce8f3; font-weight: bold; }
.head td { font-weight: bold; border-bottom-color: #c6d8ea; padding-left: 4px; }
.item td { border-bottom-color: transparent; padding-left: 30px; }
.band td:last-child, .head td:last-child, .item td:last-child { background: #fff; border-bottom-color: #d9dbdf; }
.rl { display: flex; justify-content: space-between; align-items: center; }
.rl button { width: 16px; height: 16px; background: #f7f8fa; border: 1px solid #b5b9c2; display: flex; align-items: center; justify-content: center; margin-right: 1px; }
.minus { display: inline-block; width: 9px; height: 9px; border: 1px solid #a9b1c4; background: linear-gradient(#eef1f7 3px, #6f7890 3px 4px, #eef1f7 4px); margin-right: 2px; }

/* Chart */
.chart { position: absolute; left: 159px; top: 27px; width: 872px; height: 361px; padding: 3px; background: #e7e8ea; border: 1px solid #c5c7cb; }
.plot { width: 100%; height: 100%; background: #fff; outline: 1px solid #b3b5b8; border-radius: 4px; font: 13px Lato, sans-serif; }
.plot text { fill: #222; }
.ctitle { font-size: 22px; font-weight: bold; text-anchor: middle; }
.plot .ctitle { fill: #000; }
.lines path { fill: none; stroke: #a6a6a6; }
.axis text { text-anchor: end; }
.labels text { text-anchor: middle; }
.female { fill: #5b9bd5; }
.male { fill: #ed7d31; }
.grip { position: absolute; border: 0 dotted #9a9ca0; }
.top-grip, .bottom-grip { left: 50%; width: 9px; border-top-width: 1px; }
.top-grip { top: 0; }
.bottom-grip { bottom: 0; }
.left-grip, .right-grip { top: 50%; height: 9px; border-left-width: 1px; }
.left-grip { left: 0; }
.right-grip { right: 0; }
.fieldbtn { display: flex; align-items: center; gap: 7px; height: 18px; padding: 0 7px 0 3px; border: 1px solid #bdbdbd; border-radius: 3px; background: linear-gradient(#e3e3e3, #cbcbcb); color: #444; }
.f-avg { position: absolute; left: 12px; top: 12px; width: 57px; padding-right: 0; }
.f-gender { position: absolute; right: 11px; top: 168px; width: 61px; justify-content: space-between; }
.f-axis { position: absolute; left: 12px; bottom: 10px; display: flex; gap: 1px; }
.f-axis .fieldbtn:first-child { width: 36px; }
.f-axis .fieldbtn:last-child { width: 32px; gap: 7px; }

/* Sheet tabs */
.sheetbar { display: flex; height: 19px; flex: none; background: #dfe2ea; border-top: 1px solid #b7bac2; border-bottom: 2px solid #a4a8b0; }
.navs { width: 66px; display: flex; justify-content: space-around; align-items: center; padding-left: 1px; fill: #444; }
.stab { width: 54px; font-size: 13px; line-height: 16px; position: relative; color: #444; }
.stab::after { content: ""; position: absolute; right: 0; top: 0; width: 1px; height: 16px; background: #8f949e; transform: skewX(-30deg); }
.stab.on { width: 57px; font-weight: bold; background: #fff; color: #333; }
.new { width: 26px; padding-left: 5px; }
.scroll { flex: 1; display: flex; align-items: center; margin-left: 499px; }
.split { width: 7px; height: 14px; border: 1px solid #8e939c; background: #f2f3f6; margin-right: 6px; }
.scroll button { margin-right: 5px; }
.thumb { flex: 1; max-width: 428px; height: 15px; border: 1px solid #b5b9c2; border-radius: 2px; background: linear-gradient(#f6f7f9, #dcdfe6); display: flex; align-items: center; justify-content: center; }
.thumb i { width: 5px; height: 6px; border: 1px solid #999; border-width: 0 1px; }

/* Status bar */
.status { display: flex; justify-content: space-between; height: 20px; flex: none; background: linear-gradient(#e7e8eb, #c0c3ca); color: #555; }
.ready { padding: 3px 6px 0; border-right: 1px solid #c9cbd0; }
.views { display: flex; align-items: center; gap: 4px; padding-right: 3px; }
.views .on { background: #f9d36a; padding: 2px 1px; }
.views span { margin: 0 2px 0 6px; }
.round { width: 14px; height: 14px; line-height: 12px; border: 1px solid #888; border-radius: 50%; background: #f4f4f6; }
.views input { appearance: none; width: 93px; height: 10px; margin: 0; background: linear-gradient(transparent 4px, #888 4px 5px, transparent 5px); }
.views input::-webkit-slider-thumb { appearance: none; width: 8px; height: 10px; background: #f4f4f6; border: 1px solid #888; border-radius: 0 0 4px 4px; }

/* Taskbar */
.taskbar { display: flex; height: 40px; flex: none; background: linear-gradient(90deg, #21363f, #1f323f 60%, #17243c 85%); color: #fff; }
.taskbar button { width: 49px; display: flex; align-items: center; justify-content: center; }
.taskbar .open { border-bottom: 2px solid #76b9ed; width: 41px; margin: 0 5px 0 4px; padding-top: 2px; }
.taskbar .current { border-bottom: 2px solid #76b9ed; background: #4a5a63; padding-top: 2px; }
.tray { margin-left: auto; display: flex; align-items: center; gap: 9px; padding-right: 25px; font-size: 12px; }
.ime { width: 16px; height: 16px; background: #c3d3f3; color: #2b49a5; font: bold 13px/14px "DejaVu Sans", sans-serif; text-align: center; border: 1px solid #7f9be0; }
.clock { line-height: 19px; text-align: center; margin-right: 12px; }
.lang { margin-left: -1px; padding-left: 1px; }

/* Field list */
.panel { position: absolute; left: 1052px; right: 0; top: 124px; height: 540px; overflow: hidden; border: 2px solid #858a94; border-width: 2px 0 3px 3px; background: #e9ecf2; color: #222; display: flex; flex-direction: column; white-space: nowrap; }
.panel h2 { margin: 4px 0 0 1px; height: 19px; background: #b9bdc7; color: #3c424c; font-size: 12px; line-height: 18px; padding-left: 1px; }
.panel p { margin: 14px 0 0 7px; line-height: 18px; }
.fields { margin: 2px 0 0 6px; height: 180px; border: 1px solid #b9bdc7; }
.areas { flex: 1; display: grid; grid-template-columns: 135px 135px; grid-template-rows: 1fr 23px 71px; column-gap: 9px; margin: 90px 0 0 6px; }
.areas ul { background: #fff; border: 1px solid #b5b9c1; padding: 1px; }
.areas .legend { padding-top: 12px; }
.areas h3 { display: flex; align-items: center; gap: 10px; padding-left: 1px; }
.areas h3:nth-of-type(2) { gap: 13px; padding-left: 3px; }
.areas li { height: 18px; margin-bottom: 1px; display: flex; align-items: center; justify-content: space-between; padding: 0 10px 0 6px; border: 1px solid #e8d080; background: linear-gradient(90deg, #fdeec6, #fffaf0 50%, #fdeec6); color: #444; }
.areas .hot { border-color: #e6a04c; background: linear-gradient(#fde0b8, #fbc27f); }
.defer { display: flex; justify-content: space-between; padding: 5px 0 6px 6px; height: 32px; }
.defer label { display: flex; align-items: center; gap: 6px; }
.defer input { appearance: none; width: 13px; height: 13px; margin: 0; border: 1px solid #555; background: #fff; }
.defer button { width: 16px; background: #c9c9c9; }

/* Pointer highlight */
.glow { position: absolute; left: 1215px; top: 500px; width: 59px; height: 58px; border-radius: 50%; background: #ff0; mix-blend-mode: multiply; }
.pointer { position: absolute; left: 1244px; top: 528px; }

/* Context menu */
.menu { position: absolute; left: 1038px; right: 0; top: 187px; display: flex; flex-direction: column; padding-top: 3px; border: 1px solid #bcbec3; background: #fff; box-shadow: 1px 1px 3px #999; font-size: 12px; }
.menu button { height: 22px; display: flex; align-items: center; white-space: pre; }
.menu i { width: 24px; margin-right: 8px; display: flex; justify-content: center; }
.menu hr { width: calc(100% - 32px); margin: 1px 0 1px 32px; border: 0; height: 1px; background: #e2e3e6; }
.menu .ink { color: #111; }
```
